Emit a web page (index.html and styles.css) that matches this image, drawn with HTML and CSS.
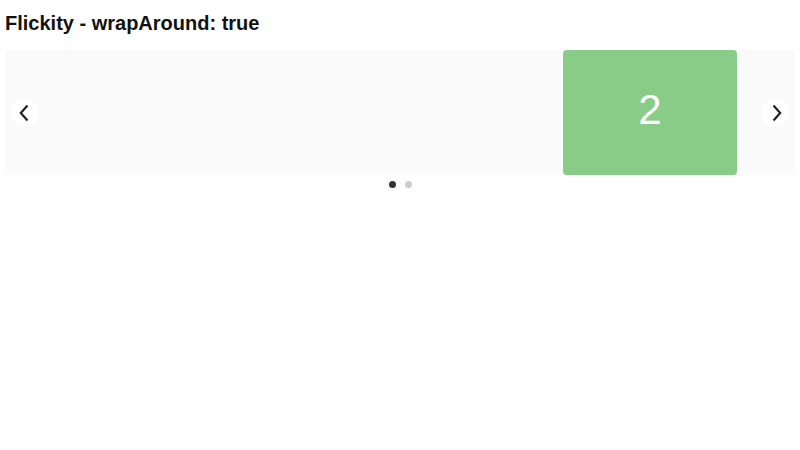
FILE: index.html
```html
<!DOCTYPE html>
<html lang="en">
<head>
  <meta charset="UTF-8" />
  <meta name="viewport" content="width=device-width, initial-scale=1.0" />
  <title>Flickity - wrapAround</title>
  <link rel="stylesheet" href="styles.css">
</head>
<body>
  <h1 class="page-title">Flickity - wrapAround: true</h1>

  <div class="carousel">
    <div class="viewport">
      <div class="slider">
        <div class="carousel-cell">2</div>
      </div>
    </div>

    <button class="nav-button previous" aria-label="Previous">
      <svg viewBox="0 0 10 18"><path d="M8.5 1.5 L1.8 9 L8.5 16.5" /></svg>
    </button>
    <button class="nav-button next" aria-label="Next">
      <svg viewBox="0 0 10 18"><path d="M1.5 1.5 L8.2 9 L1.5 16.5" /></svg>
    </button>
  </div>

  <ol class="page-dots">
    <li class="dot is-selected"></li>
    <li class="dot"></li>
  </ol>
</body>
</html>
```

FILE: styles.css
```css
* {
  box-sizing: border-box;
}

body {
  margin: 0;
  padding: 0 5px;
  font-family: "Liberation Sans", Arial, sans-serif;
  background-color: #ffffff;
  color: #111;
}

.page-title {
  margin: 12px 0 15px;
  font-size: 20px;
  line-height: 23px;
  font-weight: bold;
}

.carousel {
  position: relative;
  background: #fafafa;
  border-radius: 4px;
  height: 125px;
}

.viewport {
  overflow: hidden;
  height: 100%;
}

.slider {
  display: flex;
  height: 100%;
  padding-left: 558px;
}

.carousel-cell {
  width: 174px;
  height: 125px;
  border-radius: 4px;
  background: #8c8;
  color: #fff;
  font-size: 42px;
  line-height: 120px;
  text-align: center;
}

.nav-button {
  position: absolute;
  top: 49px;
  width: 28px;
  height: 28px;
  padding: 0;
  border: none;
  border-radius: 50%;
  background: hsla(0, 0%, 100%, 0.85);
  display: flex;
  align-items: center;
  justify-content: center;
}

.nav-button.previous {
  left: 6px;
}

.nav-button.next {
  right: 6px;
}

.nav-button svg {
  width: 10px;
  height: 18px;
  fill: none;
  stroke: #222;
  stroke-width: 2.2;
}

.nav-button.previous svg {
  margin-left: -3px;
}

.nav-button.next svg {
  margin-left: 3px;
}

.page-dots {
  list-style: none;
  margin: 6px 0 0;
  padding: 0;
  display: flex;
  justify-content: center;
  gap: 9px;
}

.dot {
  width: 7px;
  height: 7px;
  border-radius: 50%;
  background: #333;
  opacity: 0.25;
}

.dot.is-selected {
  opacity: 1;
}
```
